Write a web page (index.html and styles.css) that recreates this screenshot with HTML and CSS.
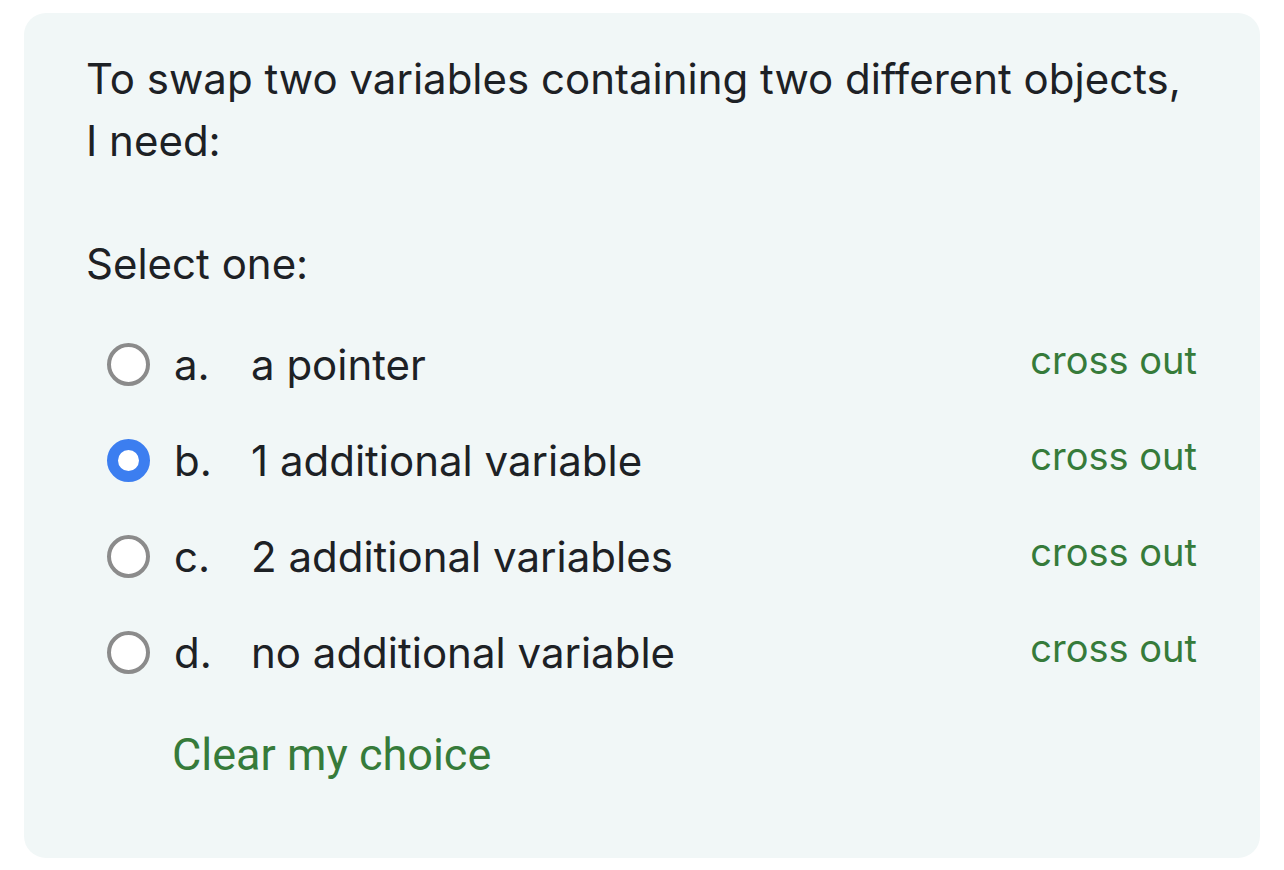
FILE: index.html
```html
<!DOCTYPE html>
<html lang="en">
<head>
    <meta charset="UTF-8">
    <meta name="viewport" content="width=device-width, initial-scale=1.0">
    <title>Question</title>
    <link rel="stylesheet" href="styles.css">
</head>
<body>
    <div class="card">
        <p class="question">To swap two variables containing two different objects, I need:</p>
        <p class="prompt">Select one:</p>

        <div class="answers">
            <div class="answer">
                <span class="radio"></span>
                <span class="letter">a.</span>
                <span class="text">a pointer</span>
                <a class="cross" href="#">cross out</a>
            </div>
            <div class="answer">
                <span class="radio checked"></span>
                <span class="letter">b.</span>
                <span class="text">1 additional variable</span>
                <a class="cross" href="#">cross out</a>
            </div>
            <div class="answer">
                <span class="radio"></span>
                <span class="letter">c.</span>
                <span class="text">2 additional variables</span>
                <a class="cross" href="#">cross out</a>
            </div>
            <div class="answer">
                <span class="radio"></span>
                <span class="letter">d.</span>
                <span class="text">no additional variable</span>
                <a class="cross" href="#">cross out</a>
            </div>
        </div>

        <a class="clear" href="#">Clear my choice</a>
    </div>
</body>
</html>
```

FILE: styles.css
```css
body {
    margin: 0;
    background-color: #ffffff;
    font-family: 'Inter', 'Liberation Sans', sans-serif;
    color: #1d2125;
}

.card {
    margin: 13px 24px 0 24px;
    height: 845px;
    box-sizing: border-box;
    padding: 35px 63px 0 62px;
    background-color: #f1f7f7;
    border-radius: 22px;
}

.question {
    margin: 0;
    font-size: 42px;
    line-height: 62px;
    width: 1105px;
}

.prompt {
    margin: 61px 0 0 0;
    font-size: 42px;
    line-height: 62px;
}

.answers {
    margin-top: 21px;
}

.answer {
    display: flex;
    align-items: center;
    height: 96px;
    padding-left: 21px;
}

.radio {
    width: 43px;
    height: 43px;
    box-sizing: border-box;
    border: 4px solid #8b8b8b;
    border-radius: 50%;
    background-color: #ffffff;
    flex-shrink: 0;
}

.radio.checked {
    border: 11px solid #3c7ef0;
}

.letter {
    width: 77px;
    margin-left: 24px;
    font-size: 42px;
}

.text {
    flex: 1;
    font-size: 42px;
}

.cross {
    font-size: 38px;
    color: #367b3a;
    text-decoration: none;
    margin-top: -8px;
}

.clear {
    display: inline-block;
    margin: 28px 0 0 86px;
    font-family: 'Roboto', sans-serif;
    font-size: 45px;
    color: #367b3a;
    text-decoration: none;
}
```
